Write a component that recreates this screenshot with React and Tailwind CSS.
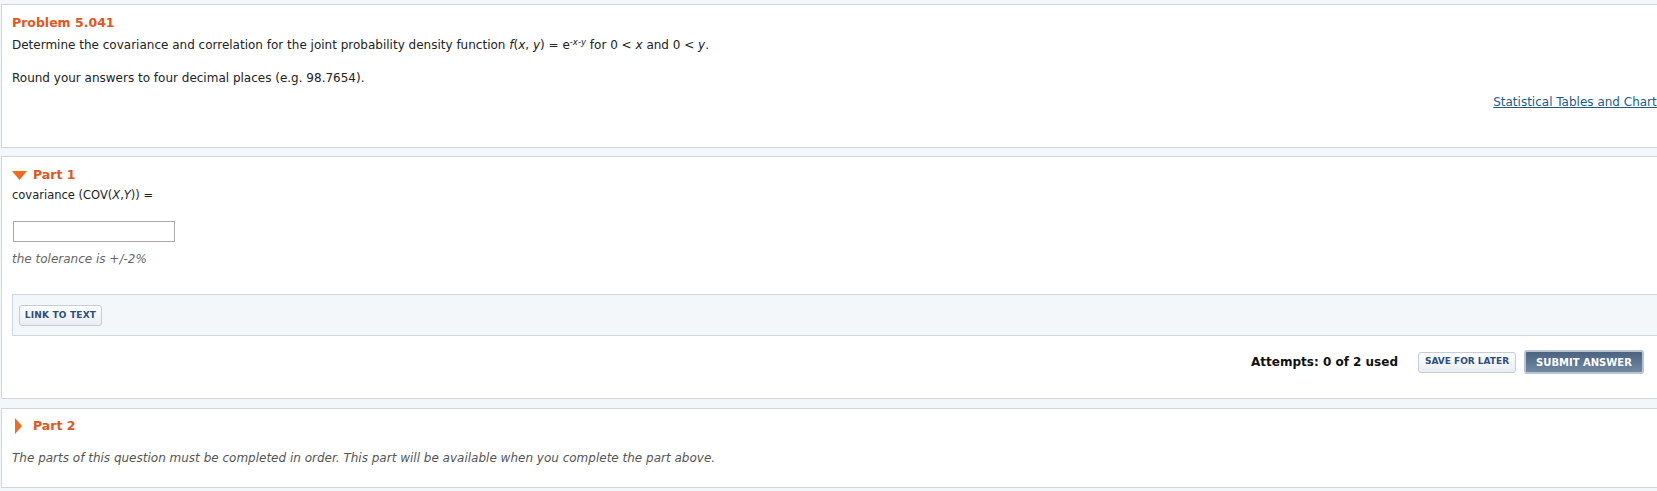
import React from "react";

const font = { fontFamily: '"DejaVu Sans", Verdana, sans-serif' };

function DownArrow() {
  return (
    <svg width="15" height="9" viewBox="0 0 15 9" className="shrink-0">
      <polygon points="0,0 15,0 7.5,9" fill="#f26a1b" />
    </svg>
  );
}

function RightArrow() {
  return (
    <svg width="7" height="16" viewBox="0 0 7 16" className="shrink-0">
      <polygon points="0,0 7,8 0,16" fill="#f26a1b" />
    </svg>
  );
}

function App() {
  return (
    <div
      className="w-[1657px] h-[491px] overflow-hidden bg-[#f4f7fa] text-[#222]"
      style={font}
    >
      <div className="w-[1674px] pl-[1px] pt-[4px]">
        {/* problem statement */}
        <div className="h-[144px] border border-[#cdd6e1] bg-white px-[10px] pt-[10px]">
          <div className="text-[12.5px] leading-[16px] font-bold text-[#e3561d]">
            Problem 5.041
          </div>
          <p className="mt-[7px] text-[12px] leading-[14px]">
            Determine the covariance and correlation for the joint probability
            density function <i>f</i>(<i>x</i>, <i>y</i>) = e
            <sup className="text-[8.5px]">
              -<i>x</i>-<i>y</i>
            </sup>{" "}
            for 0 &lt; <i>x</i> and 0 &lt; <i>y</i>.
          </p>
          <p className="mt-[19px] text-[12px] leading-[14px]">
            Round your answers to four decimal places (e.g. 98.7654).
          </p>
          <div className="mt-[10px] text-right text-[12px] leading-[14px]">
            <a href="#" className="text-[#1d5b8f] underline">
              Statistical Tables and Charts
            </a>
          </div>
        </div>

        {/* part 1 */}
        <div className="mt-[8px] h-[243px] border border-[#cdd6e1] bg-white px-[10px] pt-[10px]">
          <div className="flex items-center gap-[6px]">
            <DownArrow />
            <span className="text-[12.5px] leading-[16px] font-bold text-[#e3561d]">
              Part 1
            </span>
          </div>
          <div className="mt-[5px] text-[11.5px] leading-[14px]">
            covariance (COV(<i>X</i>,<i>Y</i>)) =
          </div>
          <input
            type="text"
            className="ml-[1px] mt-[19px] block w-[162px] h-[21px] border border-[#a9a9a9] bg-white outline-none"
          />
          <div className="mt-[10px] text-[12px] leading-[14px] italic text-[#666]">
            the tolerance is +/-2%
          </div>
          <div className="mt-[28px] h-[42px] border border-[#cdd6e1] bg-[#f4f7fa] pl-[6px] pt-[6px]">
            <button className="w-[83px] h-[21px] rounded-[3px] border border-[#c3ccd7] bg-gradient-to-b from-white to-[#e9edf2] text-[9px] font-bold text-[#2c4e7d] tracking-[0.2px]">
              LINK TO TEXT
            </button>
          </div>
          <div className="mt-[14px] flex items-center justify-end h-[24px] pr-[19px]">
            <span className="text-[12px] font-bold text-[#111]">
              Attempts: 0 of 2 used
            </span>
            <button className="ml-[20px] w-[98px] h-[21px] rounded-[3px] border border-[#c3ccd7] bg-gradient-to-b from-white to-[#e9edf2] text-[9px] font-bold text-[#2c4e7d]">
              SAVE FOR LATER
            </button>
            <button className="ml-[8px] w-[120px] h-[24px] rounded-[3px] border-2 border-[#b9c4d0] bg-gradient-to-b from-[#4a6380] to-[#7289a3] text-[10px] font-bold text-white">
              SUBMIT ANSWER
            </button>
          </div>
        </div>

        {/* part 2 */}
        <div className="mt-[9px] h-[80px] border border-[#cdd6e1] bg-white px-[10px] pt-[9px]">
          <div className="flex items-center gap-[11px] pl-[3px]">
            <RightArrow />
            <span className="text-[12.5px] leading-[16px] font-bold text-[#e3561d]">
              Part 2
            </span>
          </div>
          <div className="mt-[17px] text-[12px] leading-[14px] italic text-[#555]">
            The parts of this question must be completed in order. This part
            will be available when you complete the part above.
          </div>
        </div>
      </div>
    </div>
  );
}

export default App;
